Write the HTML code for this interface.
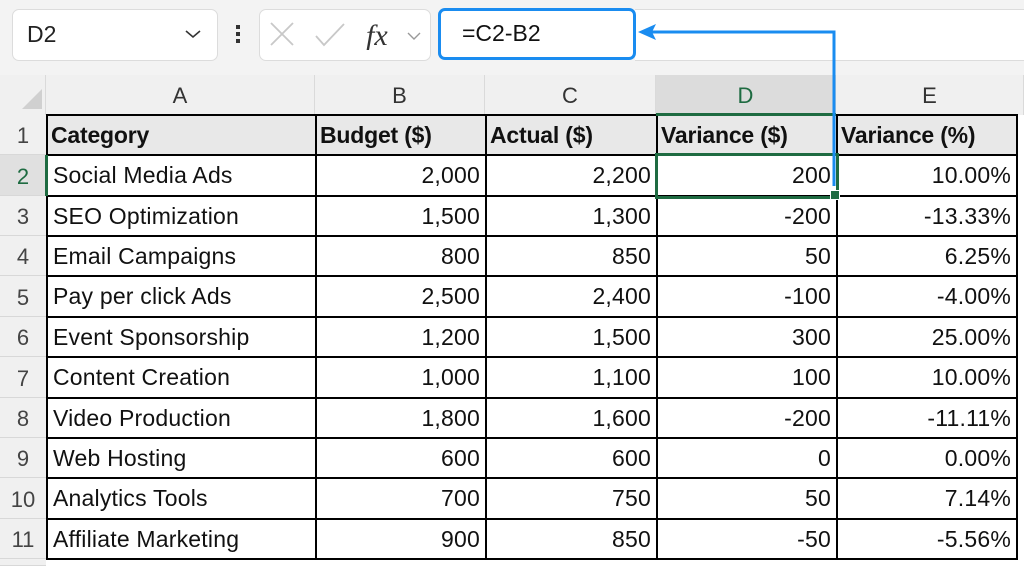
<!DOCTYPE html>
<html><head><meta charset="utf-8">
<style>
body{margin:0;width:1024px;height:566px;overflow:hidden;background:#fff;font-family:"Liberation Sans",sans-serif;position:relative}
.top{position:absolute;left:0;top:0;width:1024px;height:75px;background:#f3f3f3}
.box{position:absolute;background:#fff;border:1px solid #dcdcdc;border-radius:7px}
.abs{position:absolute}
.ch{position:absolute;top:75px;height:40px;line-height:42px;text-align:center;font-size:22px;color:#333;background:#f0f0f0;border-right:1px solid #dadada;box-sizing:border-box}
.rh{position:absolute;left:0;width:46px;text-align:center;font-size:22px;color:#444;background:#f0f0f0;border-bottom:1px solid #d8d8d8;box-sizing:border-box}
table{position:absolute;left:46px;top:114px;border-collapse:collapse;table-layout:fixed;width:970px}
td{border:2px solid #000;padding:0 5px;font-size:23px;letter-spacing:0.2px;color:#111;white-space:nowrap;overflow:hidden;text-align:right}
td:first-child{text-align:left}
tr.h td{background:#e8e8e8;font-weight:bold;text-align:left;padding-left:3px;letter-spacing:-0.2px}
</style></head><body>
<div class="top"></div>
<div class="box" style="left:12px;top:9px;width:204px;height:50px"></div>
<div class="abs" style="left:27px;top:21px;font-size:23px;color:#222">D2</div>
<svg class="abs" style="left:184px;top:28px" width="18" height="12"><path d="M2 3 L9 9 L16 3" fill="none" stroke="#333" stroke-width="1.6"/></svg>
<div class="abs" style="left:236px;top:25px;width:4px;height:4px;background:#333"></div>
<div class="abs" style="left:236px;top:32px;width:4px;height:4px;background:#333"></div>
<div class="abs" style="left:236px;top:39px;width:4px;height:4px;background:#333"></div>
<div class="box" style="left:259px;top:9px;width:170px;height:50px"></div>
<svg class="abs" style="left:268px;top:20px" width="160" height="30">
<path d="M3 3 L25 25 M25 3 L3 25" stroke="#c8c8c8" stroke-width="1.8" fill="none"/>
<path d="M48 16 L56 25 L76 4" stroke="#c8c8c8" stroke-width="1.8" fill="none"/>
<text x="98" y="25" font-family="Liberation Serif" font-style="italic" font-size="30" fill="#333">fx</text>
<path d="M140 13 L146 19 L152 13" stroke="#999" stroke-width="1.4" fill="none"/>
</svg>
<div class="abs" style="left:635px;top:9px;width:389px;height:50px;background:#fff;border-top:1px solid #dcdcdc;border-bottom:1px solid #dcdcdc"></div>
<div class="abs" style="left:438px;top:8px;width:192px;height:46px;background:#fff;border:3px solid #1a8cf0;border-radius:7px"></div>
<div class="abs" style="left:462px;top:20px;font-size:23px;color:#111">=C2-B2</div>
<div class="ch" style="left:0;width:46px"><svg width="40" height="40" style="position:absolute;left:4px;top:0"><path d="M18 34 L38 34 L38 14 Z" fill="#d0d0d0"/></svg></div>
<div class="ch" style="left:46px;width:269px">A</div>
<div class="ch" style="left:315px;width:170px">B</div>
<div class="ch" style="left:485px;width:171px">C</div>
<div class="ch" style="left:656px;width:180px;background:#dcdcdc;color:#1e6b41">D</div>
<div class="ch" style="left:836px;width:188px">E</div>
<div class="rh" style="top:115px;height:40px;line-height:42px">1</div>
<div class="rh" style="top:155px;height:41px;line-height:43px;background:#e0e0e0;color:#1e6b41">2</div>
<div class="rh" style="top:196px;height:40px;line-height:42px">3</div>
<div class="rh" style="top:236px;height:40px;line-height:42px">4</div>
<div class="rh" style="top:276px;height:41px;line-height:43px">5</div>
<div class="rh" style="top:317px;height:40px;line-height:42px">6</div>
<div class="rh" style="top:357px;height:41px;line-height:43px">7</div>
<div class="rh" style="top:398px;height:40px;line-height:42px">8</div>
<div class="rh" style="top:438px;height:40px;line-height:42px">9</div>
<div class="rh" style="top:478px;height:41px;line-height:43px">10</div>
<div class="rh" style="top:519px;height:40px;line-height:42px">11</div>
<div class="rh" style="top:559px;height:7px"></div>
<table>
<colgroup><col style="width:269px"><col style="width:170px"><col style="width:171px"><col style="width:180px"><col style="width:180px"></colgroup>
<tr class="h" style="height:40px"><td>Category</td><td>Budget ($)</td><td>Actual ($)</td><td>Variance ($)</td><td>Variance (%)</td></tr>
<tr style="height:41px"><td>Social Media Ads</td><td>2,000</td><td>2,200</td><td>200</td><td>10.00%</td></tr>
<tr style="height:40px"><td>SEO Optimization</td><td>1,500</td><td>1,300</td><td>-200</td><td>-13.33%</td></tr>
<tr style="height:40px"><td>Email Campaigns</td><td>800</td><td>850</td><td>50</td><td>6.25%</td></tr>
<tr style="height:41px"><td>Pay per click Ads</td><td>2,500</td><td>2,400</td><td>-100</td><td>-4.00%</td></tr>
<tr style="height:40px"><td>Event Sponsorship</td><td>1,200</td><td>1,500</td><td>300</td><td>25.00%</td></tr>
<tr style="height:41px"><td>Content Creation</td><td>1,000</td><td>1,100</td><td>100</td><td>10.00%</td></tr>
<tr style="height:40px"><td>Video Production</td><td>1,800</td><td>1,600</td><td>-200</td><td>-11.11%</td></tr>
<tr style="height:40px"><td>Web Hosting</td><td>600</td><td>600</td><td>0</td><td>0.00%</td></tr>
<tr style="height:41px"><td>Analytics Tools</td><td>700</td><td>750</td><td>50</td><td>7.14%</td></tr>
<tr style="height:40px"><td>Affiliate Marketing</td><td>900</td><td>850</td><td>-50</td><td>-5.56%</td></tr>
</table>
<div class="abs" style="left:656px;top:113px;width:180px;height:3px;background:#1e6b41"></div>
<div class="abs" style="left:45px;top:155px;width:3px;height:41px;background:#1e6b41"></div>
<div class="abs" style="left:655px;top:153px;width:178px;height:40px;border:3px solid #1e6b41"></div>
<div class="abs" style="left:830px;top:190px;width:8px;height:8px;background:#1e6b41;border:1px solid #fff"></div>
<svg class="abs" style="left:0;top:0" width="1024" height="200">
<path d="M834 186 L834 32 L650 32" fill="none" stroke="#1a8cf0" stroke-width="3"/>
<path d="M638 32 L656 24 L652 32 L656 40 Z" fill="#1a8cf0"/>
</svg>
</body></html>
